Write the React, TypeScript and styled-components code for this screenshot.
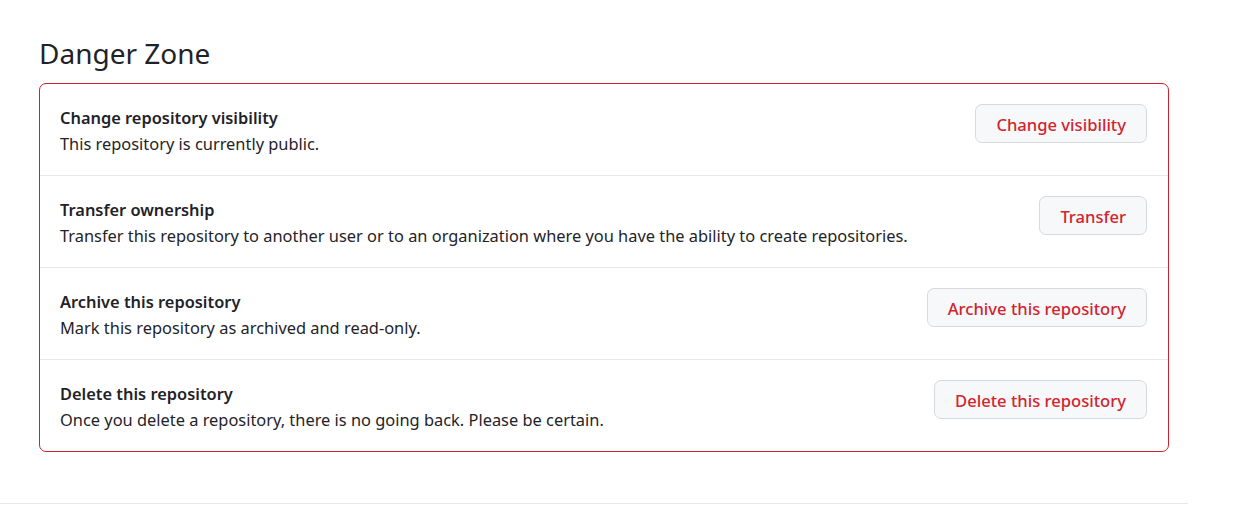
import React from 'react';
import styled, { createGlobalStyle } from 'styled-components';

const GlobalStyle = createGlobalStyle`
    html, body {
        margin: 0;
        padding: 0;
        background: #ffffff;
    }
    body {
        font-family: "Noto Sans", "Liberation Sans", sans-serif;
        color: #1f2328;
    }
`;

const rows = [
    {
        title: 'Change repository visibility',
        text: 'This repository is currently public.',
        action: 'Change visibility',
    },
    {
        title: 'Transfer ownership',
        text: 'Transfer this repository to another user or to an organization where you have the ability to create repositories.',
        action: 'Transfer',
    },
    {
        title: 'Archive this repository',
        text: 'Mark this repository as archived and read-only.',
        action: 'Archive this repository',
    },
    {
        title: 'Delete this repository',
        text: 'Once you delete a repository, there is no going back. Please be certain.',
        action: 'Delete this repository',
    },
];

const App = () => {
    return (
        <>
            <GlobalStyle />
            <Section>
                <Heading>Danger Zone</Heading>
                <DangerBox>
                    {rows.map((row, i) => (
                        <Row key={row.title} $first={i === 0}>
                            <Info>
                                <RowTitle>{row.title}</RowTitle>
                                <RowText>{row.text}</RowText>
                            </Info>
                            <DangerButton type="button">{row.action}</DangerButton>
                        </Row>
                    ))}
                </DangerBox>
            </Section>
        </>
    );
};

export default App;

const Section = styled.div`
    width: 1188px;
    box-sizing: border-box;
    padding: 31px 19px 51px 39px;
    border-bottom: 1px solid #e6e8eb;
`;

const Heading = styled.h2`
    margin: 0 0 7px;
    font-size: 28px;
    font-weight: 400;
    line-height: 45px;
    color: #1f2328;
`;

const DangerBox = styled.div`
    border: 1px solid #cf222e;
    border-radius: 7px;
`;

const Row = styled.div<{ $first: boolean }>`
    display: flex;
    align-items: flex-start;
    justify-content: space-between;
    padding: 20px 21px 20px 20px;
    border-top: ${(p) => (p.$first ? 'none' : '1px solid #e6e8eb')};
    height: 51px;
`;

const Info = styled.div`
    display: flex;
    flex-direction: column;
    padding-top: 1px;
`;

const RowTitle = styled.div`
    font-size: 16.4px;
    font-weight: 600;
    line-height: 26px;
    color: #1f2328;
`;

const RowText = styled.div`
    font-size: 16.4px;
    line-height: 26px;
    color: #1f2328;
`;

const DangerButton = styled.button`
    height: 39px;
    padding: 1px 20px 0;
    border: 1px solid #d6d9dd;
    border-radius: 7px;
    background-color: #f6f8fa;
    color: #d1242f;
    font-family: inherit;
    font-size: 16.6px;
    font-weight: 500;
    cursor: pointer;
    white-space: nowrap;
`;
